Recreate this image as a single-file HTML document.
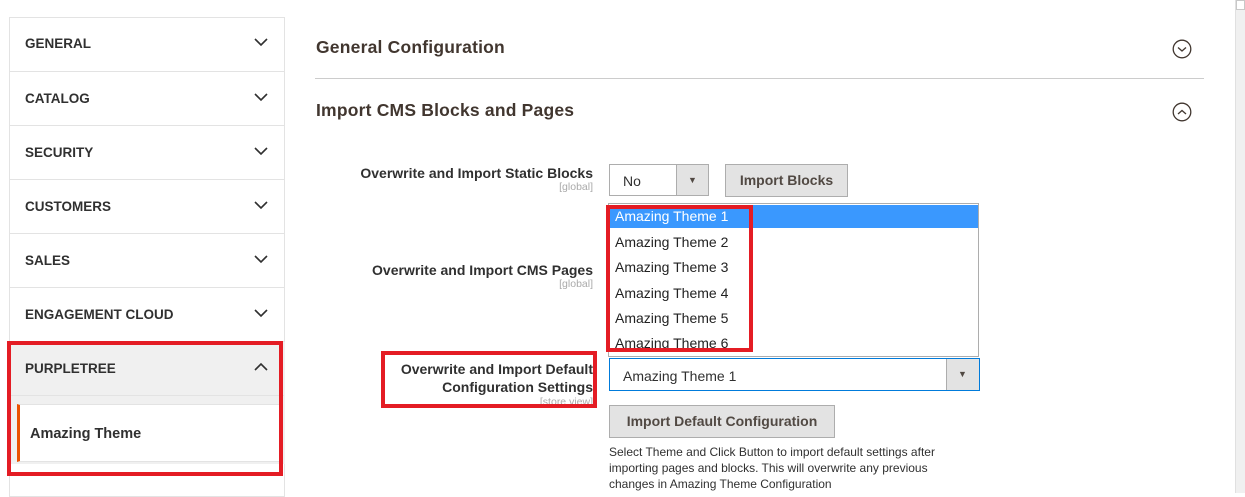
<!DOCTYPE html>
<html><head><style>
*{margin:0;padding:0;box-sizing:border-box}
body{width:1245px;height:493px;background:#fff;position:relative;overflow:hidden;font-family:"Liberation Sans",Arial,sans-serif;color:#303030}
.a{position:absolute}
.side{left:9px;top:17px;width:276px;height:480px;border:1px solid #e3e3e3;border-top:1px solid #e3e3e3}
.row{position:absolute;left:9px;width:276px;height:54px;border-top:1px solid #e3e3e3;}
.row span{position:absolute;left:16px;top:19px;font-weight:bold;font-size:13.5px;color:#303030}
.chev{position:absolute;right:17px;top:20px;width:14px;height:10px}
.lbl{position:absolute;right:652px;text-align:right;font-weight:bold;font-size:14px;color:#303030;white-space:nowrap}
.sc{position:absolute;right:652px;font-size:10.5px;color:#aaa}
.btn{position:absolute;background:#e3e3e3;border:1px solid #adadad;font-weight:bold;font-size:14px;color:#514943;text-align:center}
.opt{position:absolute;left:615px;font-size:14px;color:#222}
</style></head><body>
<div class="a side"></div>
<div class="row" style="top:17px;border-top:none"><span>GENERAL</span><svg class="chev" viewBox="0 0 14 10"><path d="M1 2l6 6 6-6" fill="none" stroke="#303030" stroke-width="1.6"/></svg></div>
<div class="row" style="top:71px"><span>CATALOG</span><svg class="chev" viewBox="0 0 14 10"><path d="M1 2l6 6 6-6" fill="none" stroke="#303030" stroke-width="1.6"/></svg></div>
<div class="row" style="top:125px"><span>SECURITY</span><svg class="chev" viewBox="0 0 14 10"><path d="M1 2l6 6 6-6" fill="none" stroke="#303030" stroke-width="1.6"/></svg></div>
<div class="row" style="top:179px"><span>CUSTOMERS</span><svg class="chev" viewBox="0 0 14 10"><path d="M1 2l6 6 6-6" fill="none" stroke="#303030" stroke-width="1.6"/></svg></div>
<div class="row" style="top:233px"><span>SALES</span><svg class="chev" viewBox="0 0 14 10"><path d="M1 2l6 6 6-6" fill="none" stroke="#303030" stroke-width="1.6"/></svg></div>
<div class="row" style="top:287px"><span>ENGAGEMENT CLOUD</span><svg class="chev" viewBox="0 0 14 10"><path d="M1 2l6 6 6-6" fill="none" stroke="#303030" stroke-width="1.6"/></svg></div>
<div class="row" style="top:341px;height:123px;background:#f0f0f0"><span>PURPLETREE</span><svg class="chev" viewBox="0 0 14 10"><path d="M1 8l6-6 6 6" fill="none" stroke="#303030" stroke-width="1.6"/></svg></div>
<div class="a" style="left:10px;top:395px;width:274px;height:1px;background:#e3e3e3"></div>
<div class="a" style="left:17px;top:404px;width:266px;height:58px;background:#fff;border-top:1px solid #e3e3e3;border-bottom:1px solid #e3e3e3;border-left:3px solid #eb5202"></div>
<div class="a" style="left:30px;top:426px;font-size:14.5px;font-weight:bold;color:#303030">Amazing Theme</div>
<div class="a" style="left:7px;top:341px;width:276px;height:135px;border:4px solid #e41c24"></div>

<div class="a" style="left:316px;top:37px;font-size:17.5px;font-weight:bold;color:#41362f;letter-spacing:.2px">General Configuration</div>
<div class="a" style="left:315px;top:78px;width:889px;height:1px;background:#ccc"></div>
<div class="a" style="left:316px;top:100px;font-size:17.5px;font-weight:bold;color:#41362f;letter-spacing:.2px">Import CMS Blocks and Pages</div>
<svg class="a" style="left:1172px;top:39px" width="20" height="20" viewBox="0 0 20 20"><circle cx="10" cy="10" r="8.8" fill="none" stroke="#41362f" stroke-width="1.3"/><path d="M6 8.5l4 3.5 4-3.5" fill="none" stroke="#41362f" stroke-width="1.3"/></svg>
<svg class="a" style="left:1172px;top:102px" width="20" height="20" viewBox="0 0 20 20"><circle cx="10" cy="10" r="8.8" fill="none" stroke="#41362f" stroke-width="1.3"/><path d="M6 12l4-3.5 4 3.5" fill="none" stroke="#41362f" stroke-width="1.3"/></svg>

<div class="lbl" style="top:165px">Overwrite and Import Static Blocks</div>
<div class="sc" style="top:181px">[global]</div>
<div class="lbl" style="top:262px">Overwrite and Import CMS Pages</div>
<div class="sc" style="top:278px">[global]</div>
<div class="lbl" style="top:360px;line-height:18px">Overwrite and Import Default<br>Configuration Settings</div>
<div class="sc" style="top:396px">[store view]</div>
<div class="a" style="left:381px;top:351px;width:216px;height:57px;border:4px solid #e41c24"></div>

<div class="a" style="left:609px;top:164px;width:100px;height:32px;border:1px solid #adadad;background:#fff"></div>
<div class="a" style="left:676px;top:165px;width:32px;height:30px;background:#e3e3e3;border-left:1px solid #adadad"></div>
<div class="a" style="left:688px;top:175px;font-size:9px;color:#514943">▼</div>
<div class="a" style="left:623px;top:173px;font-size:14px;color:#303030">No</div>
<div class="btn" style="left:725px;top:164px;width:123px;height:33px;line-height:31px">Import Blocks</div>

<div class="a" style="left:608px;top:203px;width:371px;height:154px;border:1px solid #adadad;background:#fff"></div>
<div class="a" style="left:609px;top:205px;width:369px;height:23px;background:#3a98fe"></div>
<div class="opt" style="top:208px;color:#fff">Amazing Theme 1</div>
<div class="opt" style="top:234px">Amazing Theme 2</div>
<div class="opt" style="top:259px">Amazing Theme 3</div>
<div class="opt" style="top:285px">Amazing Theme 4</div>
<div class="opt" style="top:310px">Amazing Theme 5</div>
<div class="opt" style="top:335px;height:15px;overflow:hidden">Amazing Theme 6</div>
<div class="a" style="left:606px;top:205px;width:147px;height:147px;border:4px solid #e41c24"></div>

<div class="a" style="left:609px;top:358px;width:371px;height:33px;border:1px solid #007bdb;background:#fff"></div>
<div class="a" style="left:946px;top:359px;width:33px;height:31px;background:#e3e3e3;border-left:1px solid #adadad"></div>
<div class="a" style="left:958px;top:369px;font-size:9px;color:#514943">▼</div>
<div class="a" style="left:623px;top:368px;font-size:14px;color:#303030">Amazing Theme 1</div>

<div class="btn" style="left:609px;top:405px;width:226px;height:33px;line-height:31px">Import Default Configuration</div>
<div class="a" style="left:609px;top:444px;font-size:12px;line-height:16px;color:#303030;width:360px">Select Theme and Click Button to import default settings after importing pages and blocks. This will overwrite any previous changes in Amazing Theme Configuration</div>

<div class="a" style="left:1235px;top:0;width:10px;height:493px;background:#f0f0f0;border-left:1px solid #e0e0e0"></div>
<div class="a" style="left:1236px;top:0;width:9px;height:10px;background:#fff;border:1px solid #c8c8c8"></div>
</body></html>
